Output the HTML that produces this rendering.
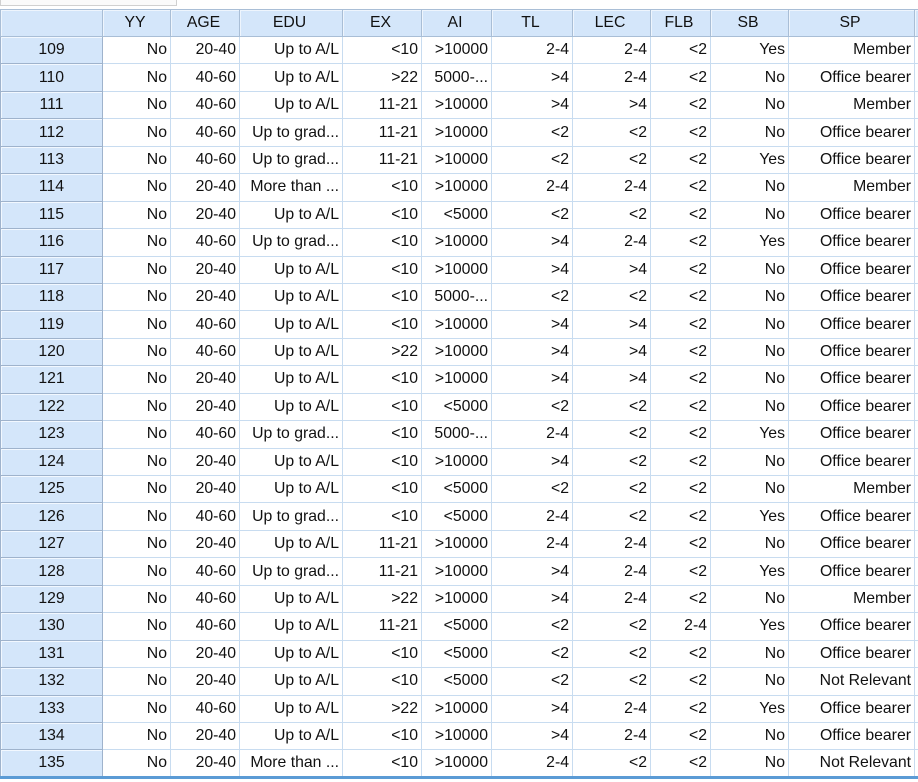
<!DOCTYPE html>
<html><head><style>
body{margin:0;width:918px;height:782px;overflow:hidden;background:#fff;font-family:"Liberation Sans",Arial,sans-serif;font-size:15.8px;color:#111;position:relative}
.top{position:absolute;left:0;top:0;width:918px;height:9px;background:#fff;border-bottom:1px solid #c9c9c9}
.tb{position:absolute;left:0;top:0;width:175px;height:5px;border:1px solid #d0d0d0;border-top:none;background:#fafafa}
table{position:absolute;left:0;top:9px;border-collapse:collapse;table-layout:fixed;width:922px}
td,th{padding:0 3px 0 0;text-align:right;border:1px solid #c8dcf0;white-space:nowrap;overflow:hidden}
th{height:26px;background:#d4e6fa;font-weight:normal;text-align:center;border:1px solid #a9bed6;box-shadow:inset 1px 1px 0 #eef5fd}
tbody tr{height:27.44px}
td.h{background:#d4e6fa;text-align:center;padding:0;border:1px solid #9fb3cc;box-shadow:inset 1px 1px 0 #f2f8ff}
tbody tr:last-child td{border-bottom:3px solid #5b9bd5}
</style></head><body>
<div class="top"><div class="tb"></div></div>
<table>
<colgroup><col style="width:102px"><col style="width:68px"><col style="width:69px"><col style="width:103px"><col style="width:79px"><col style="width:70px"><col style="width:81px"><col style="width:78px"><col style="width:60px"><col style="width:78px"><col style="width:126px"><col style="width:8px"></colgroup>
<thead><tr><th></th><th>YY</th><th>AGE</th><th>EDU</th><th>EX</th><th>AI</th><th>TL</th><th>LEC</th><th>FLB</th><th>SB</th><th>SP</th><th></th></tr></thead>
<tbody>
<tr><td class="h">109</td><td>No</td><td>20-40</td><td>Up to A/L</td><td>&lt;10</td><td>&gt;10000</td><td>2-4</td><td>2-4</td><td>&lt;2</td><td>Yes</td><td>Member</td><td></td></tr>
<tr><td class="h">110</td><td>No</td><td>40-60</td><td>Up to A/L</td><td>&gt;22</td><td>5000-...</td><td>&gt;4</td><td>2-4</td><td>&lt;2</td><td>No</td><td>Office bearer</td><td></td></tr>
<tr><td class="h">111</td><td>No</td><td>40-60</td><td>Up to A/L</td><td>11-21</td><td>&gt;10000</td><td>&gt;4</td><td>&gt;4</td><td>&lt;2</td><td>No</td><td>Member</td><td></td></tr>
<tr><td class="h">112</td><td>No</td><td>40-60</td><td>Up to grad...</td><td>11-21</td><td>&gt;10000</td><td>&lt;2</td><td>&lt;2</td><td>&lt;2</td><td>No</td><td>Office bearer</td><td></td></tr>
<tr><td class="h">113</td><td>No</td><td>40-60</td><td>Up to grad...</td><td>11-21</td><td>&gt;10000</td><td>&lt;2</td><td>&lt;2</td><td>&lt;2</td><td>Yes</td><td>Office bearer</td><td></td></tr>
<tr><td class="h">114</td><td>No</td><td>20-40</td><td>More than ...</td><td>&lt;10</td><td>&gt;10000</td><td>2-4</td><td>2-4</td><td>&lt;2</td><td>No</td><td>Member</td><td></td></tr>
<tr><td class="h">115</td><td>No</td><td>20-40</td><td>Up to A/L</td><td>&lt;10</td><td>&lt;5000</td><td>&lt;2</td><td>&lt;2</td><td>&lt;2</td><td>No</td><td>Office bearer</td><td></td></tr>
<tr><td class="h">116</td><td>No</td><td>40-60</td><td>Up to grad...</td><td>&lt;10</td><td>&gt;10000</td><td>&gt;4</td><td>2-4</td><td>&lt;2</td><td>Yes</td><td>Office bearer</td><td></td></tr>
<tr><td class="h">117</td><td>No</td><td>20-40</td><td>Up to A/L</td><td>&lt;10</td><td>&gt;10000</td><td>&gt;4</td><td>&gt;4</td><td>&lt;2</td><td>No</td><td>Office bearer</td><td></td></tr>
<tr><td class="h">118</td><td>No</td><td>20-40</td><td>Up to A/L</td><td>&lt;10</td><td>5000-...</td><td>&lt;2</td><td>&lt;2</td><td>&lt;2</td><td>No</td><td>Office bearer</td><td></td></tr>
<tr><td class="h">119</td><td>No</td><td>40-60</td><td>Up to A/L</td><td>&lt;10</td><td>&gt;10000</td><td>&gt;4</td><td>&gt;4</td><td>&lt;2</td><td>No</td><td>Office bearer</td><td></td></tr>
<tr><td class="h">120</td><td>No</td><td>40-60</td><td>Up to A/L</td><td>&gt;22</td><td>&gt;10000</td><td>&gt;4</td><td>&gt;4</td><td>&lt;2</td><td>No</td><td>Office bearer</td><td></td></tr>
<tr><td class="h">121</td><td>No</td><td>20-40</td><td>Up to A/L</td><td>&lt;10</td><td>&gt;10000</td><td>&gt;4</td><td>&gt;4</td><td>&lt;2</td><td>No</td><td>Office bearer</td><td></td></tr>
<tr><td class="h">122</td><td>No</td><td>20-40</td><td>Up to A/L</td><td>&lt;10</td><td>&lt;5000</td><td>&lt;2</td><td>&lt;2</td><td>&lt;2</td><td>No</td><td>Office bearer</td><td></td></tr>
<tr><td class="h">123</td><td>No</td><td>40-60</td><td>Up to grad...</td><td>&lt;10</td><td>5000-...</td><td>2-4</td><td>&lt;2</td><td>&lt;2</td><td>Yes</td><td>Office bearer</td><td></td></tr>
<tr><td class="h">124</td><td>No</td><td>20-40</td><td>Up to A/L</td><td>&lt;10</td><td>&gt;10000</td><td>&gt;4</td><td>&lt;2</td><td>&lt;2</td><td>No</td><td>Office bearer</td><td></td></tr>
<tr><td class="h">125</td><td>No</td><td>20-40</td><td>Up to A/L</td><td>&lt;10</td><td>&lt;5000</td><td>&lt;2</td><td>&lt;2</td><td>&lt;2</td><td>No</td><td>Member</td><td></td></tr>
<tr><td class="h">126</td><td>No</td><td>40-60</td><td>Up to grad...</td><td>&lt;10</td><td>&lt;5000</td><td>2-4</td><td>&lt;2</td><td>&lt;2</td><td>Yes</td><td>Office bearer</td><td></td></tr>
<tr><td class="h">127</td><td>No</td><td>20-40</td><td>Up to A/L</td><td>11-21</td><td>&gt;10000</td><td>2-4</td><td>2-4</td><td>&lt;2</td><td>No</td><td>Office bearer</td><td></td></tr>
<tr><td class="h">128</td><td>No</td><td>40-60</td><td>Up to grad...</td><td>11-21</td><td>&gt;10000</td><td>&gt;4</td><td>2-4</td><td>&lt;2</td><td>Yes</td><td>Office bearer</td><td></td></tr>
<tr><td class="h">129</td><td>No</td><td>40-60</td><td>Up to A/L</td><td>&gt;22</td><td>&gt;10000</td><td>&gt;4</td><td>2-4</td><td>&lt;2</td><td>No</td><td>Member</td><td></td></tr>
<tr><td class="h">130</td><td>No</td><td>40-60</td><td>Up to A/L</td><td>11-21</td><td>&lt;5000</td><td>&lt;2</td><td>&lt;2</td><td>2-4</td><td>Yes</td><td>Office bearer</td><td></td></tr>
<tr><td class="h">131</td><td>No</td><td>20-40</td><td>Up to A/L</td><td>&lt;10</td><td>&lt;5000</td><td>&lt;2</td><td>&lt;2</td><td>&lt;2</td><td>No</td><td>Office bearer</td><td></td></tr>
<tr><td class="h">132</td><td>No</td><td>20-40</td><td>Up to A/L</td><td>&lt;10</td><td>&lt;5000</td><td>&lt;2</td><td>&lt;2</td><td>&lt;2</td><td>No</td><td>Not Relevant</td><td></td></tr>
<tr><td class="h">133</td><td>No</td><td>40-60</td><td>Up to A/L</td><td>&gt;22</td><td>&gt;10000</td><td>&gt;4</td><td>2-4</td><td>&lt;2</td><td>Yes</td><td>Office bearer</td><td></td></tr>
<tr><td class="h">134</td><td>No</td><td>20-40</td><td>Up to A/L</td><td>&lt;10</td><td>&gt;10000</td><td>&gt;4</td><td>2-4</td><td>&lt;2</td><td>No</td><td>Office bearer</td><td></td></tr>
<tr><td class="h">135</td><td>No</td><td>20-40</td><td>More than ...</td><td>&lt;10</td><td>&gt;10000</td><td>2-4</td><td>&lt;2</td><td>&lt;2</td><td>No</td><td>Not Relevant</td><td></td></tr>
</tbody></table>
</body></html>
